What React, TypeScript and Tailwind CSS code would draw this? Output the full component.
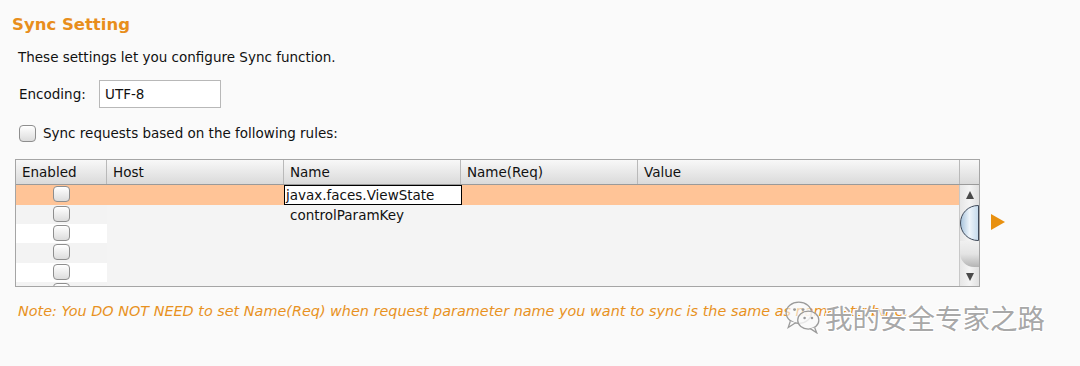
import React from "react";

const cols = [
  { label: "Enabled", w: "w-[91px]" },
  { label: "Host", w: "w-[177px]" },
  { label: "Name", w: "w-[177px]" },
  { label: "Name(Req)", w: "w-[177px]" },
  { label: "Value", w: "w-[322px]" },
];

function Check({ className = "" }: { className?: string }) {
  return (
    <div
      className={
        "w-[17px] h-[16px] rounded-[4px] border border-[#8e8e8e] bg-gradient-to-b from-[#ffffff] to-[#dcdcdc] shadow-[inset_0_1px_0_#fff] " +
        className
      }
    />
  );
}

// rows of the Enabled column: background colour per row
const enabledRows = [
  { bg: "bg-[#ffc497]", h: "h-[20px]" },
  { bg: "bg-[#f3f3f3]", h: "h-[19px]" },
  { bg: "bg-white", h: "h-[19px]" },
  { bg: "bg-[#f3f3f3]", h: "h-[20px]" },
  { bg: "bg-white", h: "h-[19px]" },
  { bg: "bg-[#f3f3f3]", h: "h-[5px]" },
];

function ScrollBar() {
  return (
    <div className="w-[20px] h-full border-l border-[#c8c8c8] bg-gradient-to-r from-[#e6e6e6] via-[#f4f4f4] to-[#e0e0e0] flex flex-col items-center">
      <svg width="10" height="10" viewBox="0 0 10 10" className="mt-[5px]">
        <path d="M5 1 L9 9 L1 9 Z" fill="#4a4a4a" />
      </svg>
      <div className="mt-[5px] w-[19px] h-[36px] rounded-l-[18px] border border-[#3f4a5a] bg-gradient-to-r from-[#a9c4dc] via-[#eef5fb] to-[#c6dbec]" />
      <div className="w-[19px] h-[26px] rounded-bl-[14px] bg-gradient-to-b from-[#f0f0f0] via-[#e4e4e4] to-[#b4b4b4]" />
      <div className="flex-1" />
      <svg width="10" height="10" viewBox="0 0 10 10" className="mb-[4px]">
        <path d="M1 1 L9 1 L5 9 Z" fill="#4a4a4a" />
      </svg>
    </div>
  );
}

export default function App() {
  return (
    <div className="relative w-[1080px] h-[366px] overflow-hidden bg-[#fafafa] font-['Lucida_Grande','DejaVu_Sans',sans-serif] text-[#111]">
      <div className="pl-[12px] pt-[13px]">
        {/* title */}
        <h1 className="text-[16.5px] leading-[24px] font-bold text-[#e88e1c]">Sync Setting</h1>
        <p className="mt-[11px] ml-[6px] text-[13.5px] leading-[18px]">
          These settings let you configure Sync function.
        </p>

        {/* encoding */}
        <div className="mt-[14px] ml-[7px] flex items-center">
          <span className="text-[13.5px] w-[80px]">Encoding:</span>
          <div className="w-[122px] h-[28px] border border-[#b8b8b8] bg-white pl-[5px] flex items-center text-[13.5px]">
            UTF-8
          </div>
        </div>

        {/* checkbox line */}
        <div className="mt-[15px] ml-[7px] flex items-center gap-[7px]">
          <Check className="w-[17px] h-[17px]" />
          <span className="text-[13.5px]">Sync requests based on the following rules:</span>
        </div>

        {/* table + arrow */}
        <div className="mt-[16px] ml-[3px] flex items-center">
          <div className="w-[965px] h-[128px] border border-[#a5a5a5] flex flex-col bg-[#f4f4f4]">
            <div className="flex h-[25px] border-b border-[#9a9a9a] bg-gradient-to-b from-[#f8f8f8] to-[#dadada]">
              {cols.map((c) => (
                <div
                  key={c.label}
                  className={c.w + " h-full border-r border-[#b9b9b9] pl-[6px] flex items-center text-[13.5px]"}
                >
                  {c.label}
                </div>
              ))}
              <div className="flex-1" />
            </div>
            <div className="flex flex-1 min-h-0 overflow-hidden">
              <div className="flex-1 relative">
                {/* selected row */}
                <div className="h-[20px] bg-[#ffc497] flex">
                  <div className="w-[268px]" />
                  <div className="w-[178px] h-[20px] border border-black bg-white pl-[1px] flex items-center text-[13.5px]">
                    javax.faces.ViewState
                  </div>
                </div>
                <div className="h-[20px] flex items-center">
                  <div className="w-[274px]" />
                  <span className="text-[13.5px]">controlParamKey</span>
                </div>
                {/* enabled column over the rows */}
                <div className="absolute left-0 top-0 w-[91px] flex flex-col">
                  {enabledRows.map((r, i) => (
                    <div key={i} className={r.bg + " " + r.h + " flex justify-center items-start pt-[1px] overflow-hidden"}>
                      <Check />
                    </div>
                  ))}
                </div>
              </div>
              <ScrollBar />
            </div>
          </div>
          <svg width="16" height="18" viewBox="0 0 16 18" className="ml-[10px] -mt-[2px]">
            <path d="M1 1 L15 9 L1 17 Z" fill="#e8900f" />
          </svg>
        </div>

        {/* note */}
        <p className="mt-[14px] ml-[6px] text-[14.4px] italic text-[#e8921f] whitespace-nowrap">
          Note: You DO NOT NEED to set Name(Req) when request parameter name you want to sync is the same as name attribute.
        </p>
      </div>

      {/* watermark over the note */}
      <div className="absolute left-[784px] top-[300px] flex items-center gap-[3px]">
        <svg width="38" height="34" viewBox="0 0 36 32">
          <ellipse cx="14" cy="12" rx="12" ry="10" fill="#fafafa" fillOpacity="0.6" stroke="#9a9a9a" strokeWidth="1.2" />
          <path d="M6 20 L4 26 L11 21.5" fill="#fafafa" stroke="#9a9a9a" strokeWidth="1.2" />
          <ellipse cx="23" cy="19" rx="10" ry="8.5" fill="#fafafa" fillOpacity="0.8" stroke="#9a9a9a" strokeWidth="1.2" />
          <path d="M29 26 L31 31 L25 27" fill="#fafafa" stroke="#9a9a9a" strokeWidth="1.2" />
          <circle cx="10" cy="9" r="1.4" fill="#9a9a9a" />
          <circle cx="18" cy="9" r="1.4" fill="#9a9a9a" />
          <circle cx="19.5" cy="17" r="1.2" fill="#9a9a9a" />
          <circle cx="26.5" cy="17" r="1.2" fill="#9a9a9a" />
        </svg>
        <span className="text-[27.5px] leading-[32px] text-[#9c9c9c]/90 font-['Noto_Sans_CJK_SC',sans-serif] [text-shadow:1px_1px_0_#fff,-1px_-1px_0_#fff,1px_-1px_0_#fff,-1px_1px_0_#fff]">
          我的安全专家之路
        </span>
      </div>
    </div>
  );
}
